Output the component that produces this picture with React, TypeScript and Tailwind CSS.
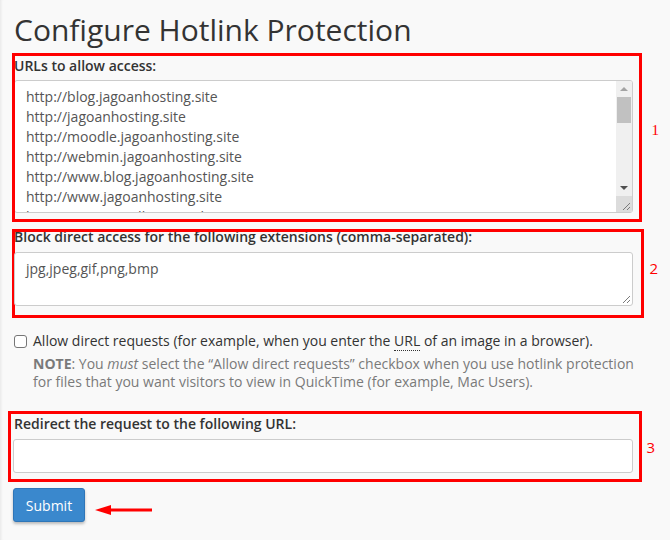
import React from 'react';

const urls = [
  'http://blog.jagoanhosting.site',
  'http://jagoanhosting.site',
  'http://moodle.jagoanhosting.site',
  'http://webmin.jagoanhosting.site',
  'http://www.blog.jagoanhosting.site',
  'http://www.jagoanhosting.site',
  'http://www.moodle.jagoanhosting.site',
];

function ResizeGrip() {
  return (
    <svg width="10" height="10" viewBox="0 0 10 10" className="block">
      <path d="M9 2 L2 9 M9 6 L6 9" stroke="#7a7a7a" strokeWidth="1" />
    </svg>
  );
}

export default function App() {
  return (
    <div
      className="min-h-[540px] bg-[#f9f9f9] pl-[14px] pr-[37px] text-[#333] shadow-[inset_3px_0_3px_-2px_rgba(0,0,0,0.08)]"
      style={{ fontFamily: '"Open Sans", sans-serif' }}
    >
      <h1 className="pt-[13px] text-[30px] leading-[33px] font-normal text-[#333]">
        Configure Hotlink Protection
      </h1>

      {/* 1 */}
      <div className="relative mt-[11px]">
        <div className="pointer-events-none absolute -top-[4px] -left-[2px] -right-[9px] -bottom-[9px] border-[3px] border-[#ff0000]" />
        <span className="absolute top-[66px] -right-[26px] text-[15px] leading-[15px] text-[#ff0000]" style={{ fontFamily: '"Liberation Serif", serif' }}>
          1
        </span>
        <label className="block text-[14px] leading-[18px] font-semibold mb-[5px]">URLs to allow access:</label>
        <div className="flex h-[133px] rounded-[3px] border border-[#ccc] bg-white overflow-hidden">
          <div className="flex-1 overflow-hidden pl-[11px] pt-[6px] text-[14px] leading-[20px] text-[#555]">
            {urls.map((u) => (
              <div key={u} className="whitespace-nowrap">{u}</div>
            ))}
          </div>
          <div className="flex w-[16px] flex-col bg-[#f0f0f0]">
            <div className="flex h-[16px] items-center justify-center">
              <div className="h-0 w-0 border-x-[4px] border-b-[4px] border-x-transparent border-b-[#a3a3a3]" />
            </div>
            <div className="mx-[1px] h-[26px] bg-[#c1c1c1]" />
            <div className="flex-1" />
            <div className="flex h-[16px] items-center justify-center">
              <div className="h-0 w-0 border-x-[4px] border-t-[4px] border-x-transparent border-t-[#505050]" />
            </div>
            <div className="flex h-[16px] items-end justify-end bg-[#dcdcdc] pr-[1px] pb-[1px]">
              <ResizeGrip />
            </div>
          </div>
        </div>
      </div>

      {/* 2 */}
      <div className="relative mt-[15px]">
        <div className="pointer-events-none absolute top-[1px] -left-[2px] -right-[11px] -bottom-[12px] border-[3px] border-[#ff0000]" />
        <span className="absolute top-[33px] -right-[25px] text-[15px] leading-[15px] text-[#ff0000]">2</span>
        <label className="block text-[14px] leading-[18px] font-semibold mb-[6px]">
          Block direct access for the following extensions (comma-separated):
        </label>
        <div className="relative h-[54px] rounded-[3px] border border-[#ccc] bg-white pl-[11px] pt-[6px] text-[14px] leading-[20px] text-[#555]">
          jpg,jpeg,gif,png,bmp
          <div className="absolute right-[1px] bottom-[1px]">
            <ResizeGrip />
          </div>
        </div>
      </div>

      {/* checkbox */}
      <div className="mt-[26px] flex items-start">
        <span className="mt-[3px] h-[13px] w-[13px] shrink-0 rounded-[3px] border border-[#767676] bg-white" />
        <div className="ml-[6px]">
          <div className="text-[14px] leading-[18px] text-[#333]">
            Allow direct requests (for example, when you enter the{' '}
            <abbr className="no-underline border-b border-dotted border-[#333]" title="Uniform Resource Locator">
              URL
            </abbr>{' '}
            of an image in a browser).
          </div>
          <p className="mt-[5px] -mr-[30px] whitespace-nowrap text-[14px] leading-[18px] text-[#7a7a7a]">
            <strong className="font-bold">NOTE</strong>: You <em>must</em> select the “Allow direct requests” checkbox when you use hotlink protection
            <br />
            for files that you want visitors to view in QuickTime (for example, Mac Users).
          </p>
        </div>
      </div>

      {/* 3 */}
      <div className="relative mt-[24px]">
        <div className="pointer-events-none absolute -top-[4px] -left-[6px] -right-[9px] -bottom-[9px] border-[3px] border-[#ff0000]" />
        <span className="absolute top-[25px] -right-[22px] text-[15px] leading-[15px] text-[#ff0000]">3</span>
        <label className="block text-[14px] leading-[18px] font-semibold mb-[6px]">
          Redirect the request to the following URL:
        </label>
        <input
          type="text"
          className="block h-[34px] w-full rounded-[3px] border border-[#ccc] bg-white px-[12px] text-[14px] outline-none"
          style={{ marginLeft: -1, width: 'calc(100% + 1px)' }}
        />
      </div>

      {/* submit */}
      <div className="mt-[15px] flex items-center">
        <button
          className="ml-[-1px] h-[34px] w-[72px] rounded-[3px] border border-[#2f76b8] bg-[#3a88cd] text-[14px] text-white shadow-[0_2px_3px_rgba(0,0,0,0.25)]"
        >
          Submit
        </button>
        <svg width="58" height="12" viewBox="0 0 58 12" className="ml-[10px] mt-[10px]">
          <polygon points="0,6 16,1 16,11" fill="#ff0000" />
          <rect x="14" y="4.5" width="43" height="3" fill="#ff0000" />
        </svg>
      </div>
    </div>
  );
}
